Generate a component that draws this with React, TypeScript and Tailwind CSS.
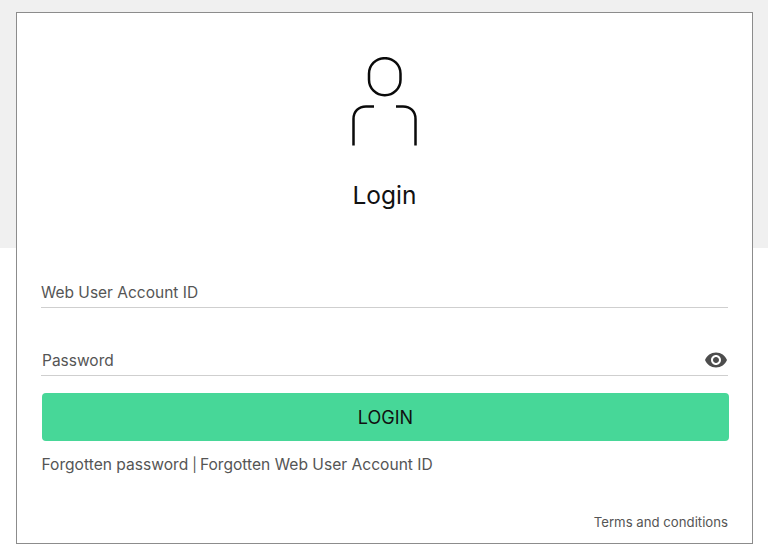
export default function App() {
  return (
    <div className="h-[559px] w-[768px] overflow-hidden bg-[linear-gradient(#f0f0f0_248px,#ffffff_248px)] pt-3 pl-4 font-['Inter',sans-serif]">
      <div className="flex h-[532px] w-[737px] flex-col border border-[#8c8c8c] bg-white pl-[24px] pr-[24px]">
        <div className="flex flex-col items-center pt-[44px]">
          <svg width="66" height="90" viewBox="0 0 66 90" fill="none" stroke="#0a0a0a" strokeWidth="2.5">
            <rect x="17" y="1.2" width="31.5" height="37" rx="15.5" />
            <path d="M22 49.5 H14 C6.5 49.5 1.5 54.5 1.5 62 V88.5" />
            <path d="M44 49.5 H51 C58.5 49.5 63.5 54.5 63.5 62 V88.5" />
          </svg>
          <h1 className="mt-[32px] text-[24.5px] leading-[32px] font-normal text-[#111]">Login</h1>
        </div>
        <div className="mt-[66px] flex h-[31px] items-center border-b border-[#cfcfcf] pt-[2px] text-[15.5px] text-[#555]">
          Web User Account ID
        </div>
        <div className="mt-[37px] flex h-[31px] items-center justify-between border-b border-[#cfcfcf] pt-[2px] pl-px text-[15.5px] text-[#555]">
          <span>Password</span>
          <svg className="-mt-[2px]" width="24" height="24" viewBox="0 0 24 24" fill="#4d4d4d">
            <path d="M12 4.5C7 4.5 2.73 7.61 1 12c1.73 4.39 6 7.5 11 7.5s9.27-3.11 11-7.5c-1.73-4.39-6-7.5-11-7.5zM12 17c-2.76 0-5-2.24-5-5s2.24-5 5-5 5 2.24 5 5-2.24 5-5 5zm0-8c-1.66 0-3 1.34-3 3s1.34 3 3 3 3-1.34 3-3-1.34-3-3-3z" />
          </svg>
        </div>
        <button className="mt-[17px] ml-px h-[48px] w-[687px] rounded-[4px] bg-[#47d798] text-[18px] text-[#111]">LOGIN</button>
        <div className="mt-[14px] text-[15.6px] leading-[20px] text-[#555]">
          <span className="ml-[0.5px]">Forgotten password</span>
          <span className="mr-[3px] ml-[4px] text-[14px]">|</span>
          <span>Forgotten Web User Account ID</span>
        </div>
        <div className="mt-[38px] text-right text-[13.2px] leading-[18px] text-[#555]">Terms and conditions</div>
      </div>
    </div>
  );
}
